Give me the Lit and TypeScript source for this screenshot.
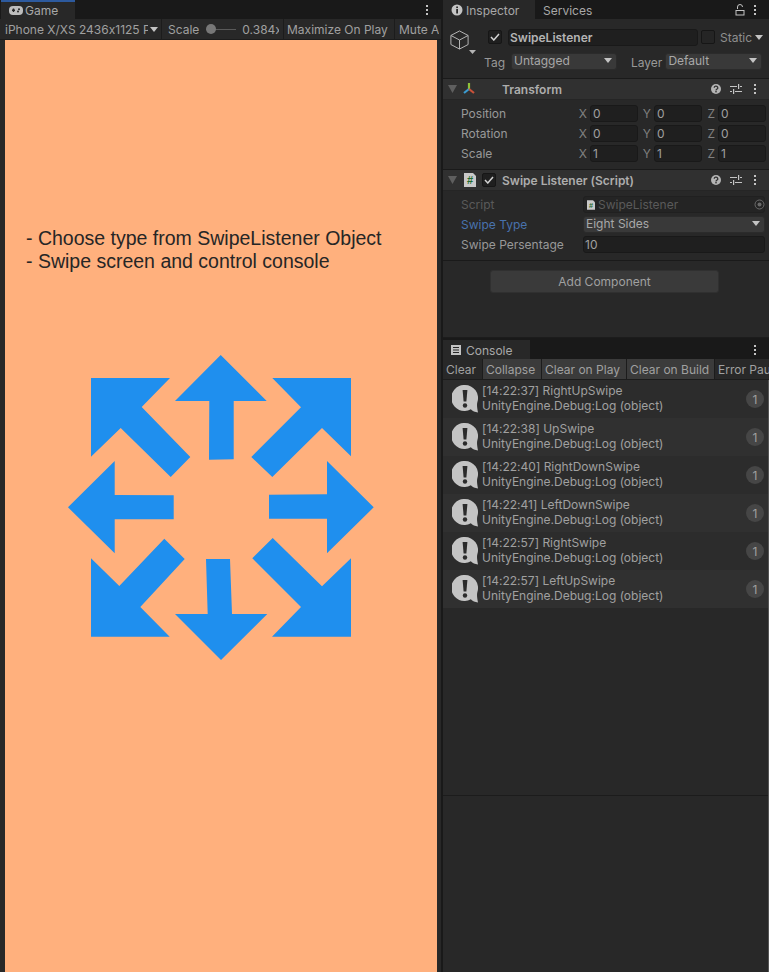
import { LitElement, html, css, svg } from "lit";
import { customElement } from "lit/decorators.js";

const dots = () => html`<svg class="ic" width="4" height="12" viewBox="0 0 4 12"><g fill="#c4c4c4"><rect x="1" y="1" width="2" height="2"/><rect x="1" y="5" width="2" height="2"/><rect x="1" y="9" width="2" height="2"/></g></svg>`;
const help = () => html`<svg class="ic" width="12" height="12" viewBox="0 0 12 12"><circle cx="6" cy="6" r="5" fill="#b4b4b4"/><path d="M4.2 4.8a1.8 1.6 0 1 1 2.6 1.4c-.6.4-.8.6-.8 1.2" fill="none" stroke="#303030" stroke-width="1.3"/><rect x="5.3" y="8" width="1.4" height="1.4" fill="#303030"/></svg>`;
const sliders = () => html`<svg class="ic" width="12" height="12" viewBox="0 0 12 12"><g fill="#c4c4c4"><rect x="0" y="3" width="7" height="1"/><rect x="10" y="3" width="2" height="1"/><rect x="8" y="1" width="1.2" height="5"/><rect x="0" y="8" width="2" height="1"/><rect x="5" y="8" width="7" height="1"/><rect x="3" y="6" width="1.2" height="5"/></g></svg>`;
const caret = () => html`<svg class="caret" width="8" height="5" viewBox="0 0 8 5"><path d="M0 0h8L4 5z" fill="#c4c4c4"/></svg>`;
const foldout = () => html`<svg class="fold" width="9" height="8" viewBox="0 0 9 8"><path d="M0 0h9L4.5 8z" fill="#5f5f5f"/></svg>`;
const check = () => html`<span class="check"><svg width="10" height="8" viewBox="0 0 10 8"><path d="M1 4l2.8 3L9 1" fill="none" stroke="#d2d2d2" stroke-width="1.5"/></svg></span>`;
const scriptIcon = (w: number, h: number) => html`<svg class="ic" width=${w} height=${h} viewBox="0 0 12 14"><path d="M0 0h9l3 3v11H0z" fill="#c9c9c9"/><text x="6" y="11" text-anchor="middle" class="hash">#</text></svg>`;
const logIcon = () => html`<svg class="ic" width="26" height="28" viewBox="0 0 26 28"><path d="M13 0a13 13 0 0 1 12.400 17c-.7 2.500-.4 5 .6 10.500-3-.4-5.500-1.600-7.200-3.300A13 13 0 1 1 13 0z" fill="#c4c4c4"/><path d="M10.600 5h4.800l-1 11.500h-2.800z" fill="#2b2b2b"/><circle cx="13" cy="20.500" r="2.200" fill="#2b2b2b"/></svg>`;

const arrows = [
  "220.7,355 175,401 209.3,401 209,459.7 233.7,459.200 233.700,401 266.700,401",
  "91,378 170,378 141.700,407 190.300,457 170.700,477 120.700,428 91,456.700",
  "351,378 272.300,378 301,407.300 251.300,457 272.300,477 322,428 351,456.300",
  "68,507.300 114.700,461 114.700,495 173.700,495.300 173.700,519.300 114.700,519.300 114.700,553.300",
  "373.700,507.300 327,461 327,494.300 269,494.700 269,518.700 327,518.700 327,553.300",
  "91,558.300 119.300,586 164.300,538.700 184.700,559 140.300,607 169.700,636.700 91,636.700",
  "351,558.300 322,586.300 272.700,538 252.300,558.300 301,607 272,636.700 351,636.700",
  "221,660 175,614 207.700,614 206,559 230,559 232,614 267.300,614",
];

const vecs = [
  ["Position", "0", "0", "0"],
  ["Rotation", "0", "0", "0"],
  ["Scale", "1", "1", "1"],
];
const logs = [
  "[14:22:37] RightUpSwipe",
  "[14:22:38] UpSwipe",
  "[14:22:40] RightDownSwipe",
  "[14:22:41] LeftDownSwipe",
  "[14:22:57] RightSwipe",
  "[14:22:57] LeftUpSwipe",
];

@customElement("app-root")
export class AppRoot extends LitElement {
  static styles = css`
    :host { display: block; width: 769px; height: 972px; overflow: hidden; background: #191919; font-family: Inter, "Liberation Sans", sans-serif; font-size: 12px; color: #a8a8a8; font-feature-settings: "calt" 0, "liga" 0; }
    * { box-sizing: border-box; }
    .ic { display: block; flex: none; }
    .hash { font: 700 11px "Liberation Sans", sans-serif; fill: #1f6b2f; }
    .root { display: flex; height: 972px; }
    .left { width: 441px; flex: none; display: flex; flex-direction: column; }
    .right { width: 326px; margin-left: 2px; flex: none; display: flex; flex-direction: column; }
    .tabbar { height: 19px; flex: none; display: flex; align-items: stretch; background: #191919; position: relative; }
    .tab { display: flex; align-items: center; gap: 4px; background: #282828; padding: 1px 0 0 8px; }
    .gametab { width: 74px; margin-left: 1px; border-top: 2px solid #2d5a9e; padding-top: 0; height: 19px; gap: 2px; }
    .menu { margin-left: auto; display: flex; align-items: center; gap: 8px; padding-right: 12px; padding-top: 1px; }
    .lefttool { height: 21px; flex: none; display: flex; background: #282828; align-items: stretch; overflow: hidden; white-space: nowrap; border-bottom: 1px solid #1c1c1c; color: #a0a0a0; }
    .seg { display: flex; align-items: center; border-right: 1px solid #1c1c1c; padding-left: 5px; overflow: hidden; }
    .seg.device { width: 162px; gap: 2px; }
    .device span { width: 143px; overflow: hidden; flex: none; }
    .seg.scale { width: 122px; padding-left: 6px; gap: 9px; }
    .track { width: 30px; height: 12px; flex: none; display: flex; align-items: center; position: relative; margin: 0 -3px 0 -2px; }
    .track::before { content: ""; flex: 1; height: 1px; background: #5a5a5a; }
    .thumb { position: absolute; left: 0; top: 1px; width: 10px; height: 10px; border-radius: 50%; background: #777; }
    .zoomv { width: 37px; overflow: hidden; flex: none; }
    .seg.max { width: 111px; padding-left: 3px; }
    .seg.mute { width: 44px; flex: none; border-right: none; padding-left: 4px; }
    .view { flex: 1; background: #282828; padding: 0 4px 0 5px; }
    .game { height: 100%; background: #ffb07d; position: relative; overflow: hidden; padding: 187px 0 0 21px; font: 19.500px/22.500px "Liberation Sans", Arial, sans-serif; color: #262626; }
    .game svg { position: absolute; left: -5px; top: -40px; }
    .arrow { fill: #1f8fee; }

    .intab { width: 92px; padding-left: 8px; gap: 3px; }
    .svc { padding: 1px 0 0 8px; display: flex; align-items: center; }
    .insp { height: 319px; flex: none; background: #282828; display: flex; flex-direction: column; border-bottom: 1px solid #1c1c1c; }
    .objhead { height: 60px; flex: none; border-bottom: 1px solid #1a1a1a; display: grid; grid-template-columns: 38px 1fr; padding: 9px 0 0 7px; }
    .cubewrap { position: relative; height: 34px; padding-top: 2px; }
    .small-caret { position: absolute; left: 19px; top: 22px; }
    .r1 { display: flex; align-items: center; height: 18px; gap: 3px; }
    .check { width: 14px; height: 14px; flex: none; background: #1f1f1f; border: 1px solid #161616; border-radius: 2px; display: flex; align-items: center; justify-content: center; }
    .check.off { background: #252525; }
    .namebox { width: 190px; height: 17px; margin-left: 3px; background: #1f1f1f; border-radius: 3px; border: 1px solid #191919; padding-left: 1px; font-weight: 600; color: #b4b4b4; line-height: 15px; }
    .static { display: flex; align-items: center; gap: 3px; margin-left: 2px; color: #8e8e8e; }
    .r2 { display: flex; align-items: center; height: 18px; margin-top: 6px; color: #989898; }
    .r2 .lbl1 { width: 26px; margin-left: -9px; text-align: right; margin-right: 6px; padding-top: 2px; }
    .drop { height: 17px; background: #393939; border-radius: 3px; border: 1px solid #2b2b2b; display: flex; align-items: center; justify-content: space-between; padding: 0 4px 2px 2px; color: #a8a8a8; }
    .tagdrop { width: 106px; }
    .laydrop { width: 97px; }
    .r2 .lbl2 { margin-left: 14px; margin-right: 3px; padding-top: 2px; }
    .comphead { height: 21px; flex: none; background: #303030; display: flex; align-items: center; padding: 0 6px 0 5px; font-weight: 600; color: #adadad; border-bottom: 1px solid #252525; }
    .comphead .tools { margin-left: auto; display: flex; align-items: center; gap: 8px; padding-right: 6px; }
    .comphead .tools svg:last-child { margin-left: 3px; }
    .comphead .nm { margin-left: 26px; }
    .comphead .gz { margin-left: 5px; }
    .comphead.s .ico { margin-left: 7px; }
    .comphead.s .check { margin-left: 6px; }
    .comphead.s .nm { margin-left: 6px; }
    .vecs { padding: 4px 0 0 18px; display: flex; flex-direction: column; gap: 2px; border-bottom: 1px solid #1a1a1a; height: 70px; flex: none; }
    .vec { height: 18px; display: grid; grid-template-columns: 115px repeat(3, 64px); align-items: center; color: #989898; }
    .vf { display: flex; align-items: center; gap: 3px; padding-left: 2px; }
    .vf i { font-style: normal; width: 9px; flex: none; text-align: right; color: #808080; }
    .vf b { font-weight: 400; width: 48px; flex: none; height: 17px; background: #1f1f1f; border: 1px solid #191919; border-radius: 3px; padding-left: 2px; line-height: 15px; color: #a0a0a0; }
    .props { padding: 5px 4px 0 18px; display: flex; flex-direction: column; gap: 3px; height: 70px; border-bottom: 1px solid #1a1a1a; flex: none; }
    .prop { height: 17px; display: grid; grid-template-columns: 122px 1fr; align-items: center; color: #989898; }
    .prop.dim { color: #5a5a5a; }
    .prop.blue { color: #4872ad; }
    .objf { height: 17px; background: #242424; border: 1px solid #202020; border-radius: 3px; display: flex; align-items: center; padding: 0 0 0 3px; gap: 3px; color: #5a5a5a; }
    .objf svg:last-child { margin-left: auto; margin-right: -1px; }
    .dropwide { padding-left: 2px; }
    .numf { height: 17px; background: #1f1f1f; border: 1px solid #191919; border-radius: 3px; padding-left: 1px; line-height: 15px; color: #a0a0a0; }
    .addrow { display: flex; justify-content: center; padding-top: 9px; }
    .add { width: 229px; height: 23px; background: #3a3a3a; border: 1px solid #303030; border-radius: 3px; display: flex; align-items: center; justify-content: center; color: #a0a0a0; margin-right: 3px; padding-bottom: 1px; }

    .gap2 { height: 2px; flex: none; background: #191919; }
    .contab { width: 87px; padding-left: 8px; gap: 5px; }
    .contool { height: 21px; flex: none; display: flex; background: #282828; border-bottom: 1px solid #1c1c1c; white-space: nowrap; overflow: hidden; color: #a0a0a0; }
    .cb { display: flex; align-items: center; padding-left: 3px; border-right: 1px solid #1c1c1c; flex: none; }
    .cb.on { background: #3b3b3b; }
    .logs { flex: 1; background: #282828; display: flex; flex-direction: column; border-right: 1px solid #555; }
    .top { height: 416px; flex: none; border-bottom: 1px solid #1c1c1c; }
    .log { height: 38px; display: flex; align-items: center; padding: 0 4px 0 9px; color: #a0a0a0; line-height: 15px; }
    .log:nth-child(odd) { background: #2c2c2c; }
    .log:nth-child(even) { background: #303030; }
    .log .txt { margin: 0 0 2px 4px; }
    .badge { margin-left: auto; width: 18px; height: 18px; border-radius: 50%; background: #464646; display: flex; align-items: center; justify-content: center; font-size: 12px; color: #a0a0a0; }
  `;

  render() {
    return html`<div class="root">
      <div class="left">
        <div class="tabbar">
          <div class="tab gametab">
            <svg class="ic" width="14" height="9" viewBox="0 0 14 9"><rect x="0" y="0" width="14" height="9" rx="4" fill="#bdbdbd"/><g fill="#282828"><rect x="3" y="3.500" width="3" height="1.500"/><rect x="3.800" y="2.500" width="1.400" height="3.500"/><circle cx="10" cy="3.200" r="1"/><circle cx="9" cy="5.500" r="1"/></g></svg>
            <span>Game</span>
          </div>
          <div class="menu">${dots()}</div>
        </div>
        <div class="lefttool">
          <div class="seg device"><span>iPhone X/XS 2436x1125 Portrait</span>${caret()}</div>
          <div class="seg scale"><span>Scale</span><div class="track"><div class="thumb"></div></div><span class="zoomv">0.384x</span></div>
          <div class="seg max">Maximize On Play</div>
          <div class="seg mute">Mute Audio</div>
        </div>
        <div class="view">
          <div class="game">
            <div>- Choose type from SwipeListener Object</div>
            <div>- Swipe screen and control console</div>
            <svg width="441" height="972" viewBox="0 0 441 972">${arrows.map((p) => svg`<polygon class="arrow" points=${p}></polygon>`)}</svg>
          </div>
        </div>
      </div>

      <div class="right">
        <div class="tabbar">
          <div class="tab intab">
            <svg class="ic" width="12" height="12" viewBox="0 0 12 12"><circle cx="6" cy="6" r="5.500" fill="#c4c4c4"/><rect x="5.200" y="5" width="1.800" height="4.500" fill="#282828"/><rect x="5.200" y="2.500" width="1.800" height="1.600" fill="#282828"/></svg>
            <span>Inspector</span>
          </div>
          <div class="svc">Services</div>
          <div class="menu">
            <svg class="ic" width="10" height="12" viewBox="0 0 10 12"><path d="M2.500 5V3a2.500 2.500 0 0 1 5 0" fill="none" stroke="#c4c4c4"/><rect x="1" y="6.500" width="8" height="4.500" fill="none" stroke="#c4c4c4"/></svg>
            ${dots()}
          </div>
        </div>
        <div class="insp">
          <div class="objhead">
            <div class="cubewrap">
              <svg class="ic" width="19" height="20" viewBox="0 0 21 22"><g fill="none" stroke="#b4b4b4" stroke-width="1.100"><path d="M10.500 1L20 6v10l-9.500 5L1 16V6z"/><path d="M1 6l9.500 5L20 6M10.500 11v10"/></g></svg>
              <svg class="ic small-caret" width="7" height="4" viewBox="0 0 7 4"><path d="M0 0h7L3.500 4z" fill="#b4b4b4"/></svg>
            </div>
            <div>
              <div class="r1">${check()}<div class="namebox">SwipeListener</div><span class="check off"></span><div class="static">Static${caret()}</div></div>
              <div class="r2"><span class="lbl1">Tag</span><div class="drop tagdrop"><span>Untagged</span>${caret()}</div><span class="lbl2">Layer</span><div class="drop laydrop"><span>Default</span>${caret()}</div></div>
            </div>
          </div>
          <div class="comphead">
            ${foldout()}
            <svg class="ic gz" width="14" height="14" viewBox="0 0 14 14"><path d="M7 1v6" stroke="#8fc23a" stroke-width="2.200"/><path d="M7 7L2 11" stroke="#3b9bd0" stroke-width="2.200"/><path d="M7 7l5 4" stroke="#c9523a" stroke-width="2.200"/></svg>
            <span class="nm">Transform</span>
            <div class="tools">${help()}${sliders()}${dots()}</div>
          </div>
          <div class="vecs">
            ${vecs.map((v) => html`<div class="vec"><span>${v[0]}</span><div class="vf"><i>X</i><b>${v[1]}</b></div><div class="vf"><i>Y</i><b>${v[2]}</b></div><div class="vf"><i>Z</i><b>${v[3]}</b></div></div>`)}
          </div>
          <div class="comphead s">
            ${foldout()}
            <span class="ico">${scriptIcon(12, 14)}</span>
            ${check()}
            <span class="nm">Swipe Listener (Script)</span>
            <div class="tools">${help()}${sliders()}${dots()}</div>
          </div>
          <div class="props">
            <div class="prop dim"><span>Script</span><div class="objf">${scriptIcon(8, 10)}<span>SwipeListener</span><svg class="ic" width="11" height="11" viewBox="0 0 11 11"><circle cx="5.500" cy="5.500" r="4.500" fill="none" stroke="#6a6a6a"/><circle cx="5.500" cy="5.500" r="2" fill="#6a6a6a"/></svg></div></div>
            <div class="prop blue"><span>Swipe Type</span><div class="drop dropwide"><span>Eight Sides</span>${caret()}</div></div>
            <div class="prop"><span>Swipe Persentage</span><div class="numf">10</div></div>
          </div>
          <div class="addrow"><div class="add">Add Component</div></div>
        </div>
        <div class="gap2"></div>
        <div class="tabbar">
          <div class="tab contab">
            <svg class="ic" width="10" height="10" viewBox="0 0 10 10"><path d="M0 0h10v10H0z" fill="#c4c4c4"/><path d="M2 2.500h6M2 5h6M2 7.500h6" stroke="#282828"/></svg>
            <span>Console</span>
          </div>
          <div class="menu">${dots()}</div>
        </div>
        <div class="contool">
          <div class="cb" style="width:40px">Clear</div>
          <div class="cb on" style="width:59px">Collapse</div>
          <div class="cb on" style="width:85px">Clear on Play</div>
          <div class="cb on" style="width:88px">Clear on Build</div>
          <div class="cb" style="width:60px;border:none">Error Pause</div>
        </div>
        <div class="logs">
          <div class="top">
            ${logs.map((l) => html`<div class="log">${logIcon()}<div class="txt"><div>${l}</div><div>UnityEngine.Debug:Log (object)</div></div><div class="badge">1</div></div>`)}
          </div>
        </div>
      </div>
    </div>`;
  }
}
